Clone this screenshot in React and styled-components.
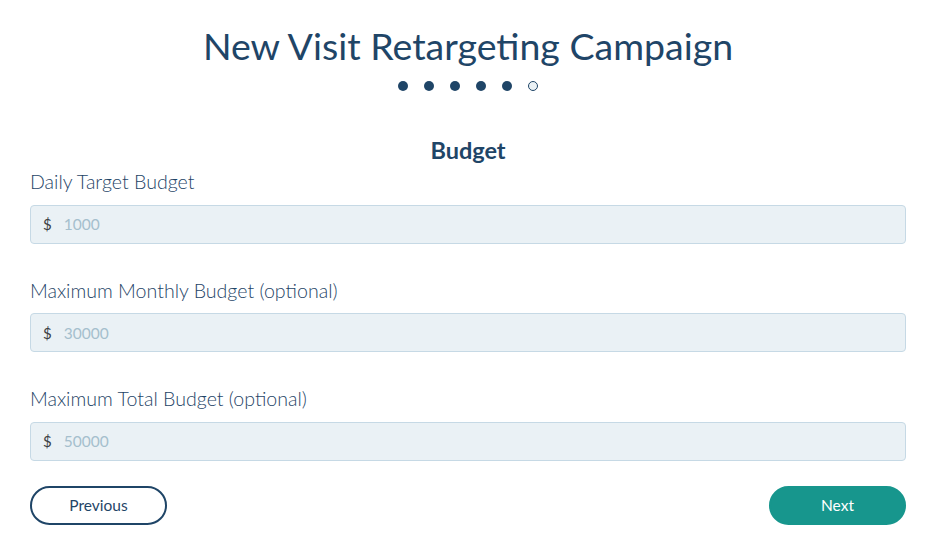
import styled, { createGlobalStyle } from "styled-components";

const GlobalStyle = createGlobalStyle`
  body {
    margin: 0;
    background: #fff;
    font-family: Lato, "Open Sans", sans-serif;
    color: #1f4567;
  }
`;

const Page = styled.div`
  display: flex;
  flex-direction: column;
  padding: 24px 30px 0;
`;

const Title = styled.h1`
  margin: 0;
  text-align: center;
  font-size: 37.5px;
  line-height: 44px;
  font-weight: 400;
  color: #1f4567;
`;

const Steps = styled.div`
  display: flex;
  justify-content: center;
  gap: 16px;
  margin-top: 13px;
`;

const Dot = styled.span`
  width: 10px;
  height: 10px;
  border-radius: 50%;
  box-sizing: border-box;
  background: ${(p) => (p.$done ? "#1f4567" : "#eaf1f5")};
  border: ${(p) => (p.$done ? "none" : "1.5px solid #1f4567")};
`;

const Section = styled.h2`
  margin: 45px 0 0;
  text-align: center;
  font-size: 23.5px;
  line-height: 28px;
  font-weight: 700;
  color: #1f4567;
`;

const Field = styled.div`
  display: flex;
  flex-direction: column;
  margin-top: ${(p) => (p.$first ? "6px" : "35px")};
`;

const Label = styled.label`
  font-size: 19.6px;
  line-height: 24px;
  font-weight: 300;
  color: #1f4567;
`;

const InputBox = styled.div`
  display: flex;
  align-items: center;
  gap: 12px;
  height: 39px;
  box-sizing: border-box;
  margin-top: 10.5px;
  padding: 0 12px;
  background: #eaf1f5;
  border: 1px solid #c6d9e5;
  border-radius: 4px;
`;

const Prefix = styled.span`
  font-size: 15px;
  color: #3a3f44;
`;

const Input = styled.input`
  flex: 1;
  border: none;
  background: transparent;
  outline: none;
  font-family: inherit;
  font-size: 15.5px;
  color: #1f4567;
  padding: 0;

  &::placeholder {
    color: #a5bfcd;
  }
`;

const Actions = styled.div`
  display: flex;
  justify-content: space-between;
  margin-top: 25px;
`;

const Button = styled.button`
  width: 137px;
  height: 39px;
  box-sizing: border-box;
  border-radius: 20px;
  font-family: inherit;
  font-size: 15.5px;
  cursor: pointer;
  border: 2px solid ${(p) => (p.$primary ? "#17968d" : "#1f4567")};
  background: ${(p) => (p.$primary ? "#17968d" : "#fff")};
  color: ${(p) => (p.$primary ? "#fff" : "#1f4567")};
`;

const fields = [
  { label: "Daily Target Budget", value: "1000" },
  { label: "Maximum Monthly Budget (optional)", value: "30000" },
  { label: "Maximum Total Budget (optional)", value: "50000" },
];

export default function App() {
  return (
    <>
      <GlobalStyle />
      <Page>
        <Title>New Visit Retargeting Campaign</Title>
        <Steps>
          {[1, 2, 3, 4, 5, 6].map((n) => (
            <Dot key={n} $done={n < 6} />
          ))}
        </Steps>
        <Section>Budget</Section>
        {fields.map((f, i) => (
          <Field key={f.label} $first={i === 0}>
            <Label>{f.label}</Label>
            <InputBox>
              <Prefix>$</Prefix>
              <Input placeholder={f.value} />
            </InputBox>
          </Field>
        ))}
        <Actions>
          <Button>Previous</Button>
          <Button $primary>Next</Button>
        </Actions>
      </Page>
    </>
  );
}
